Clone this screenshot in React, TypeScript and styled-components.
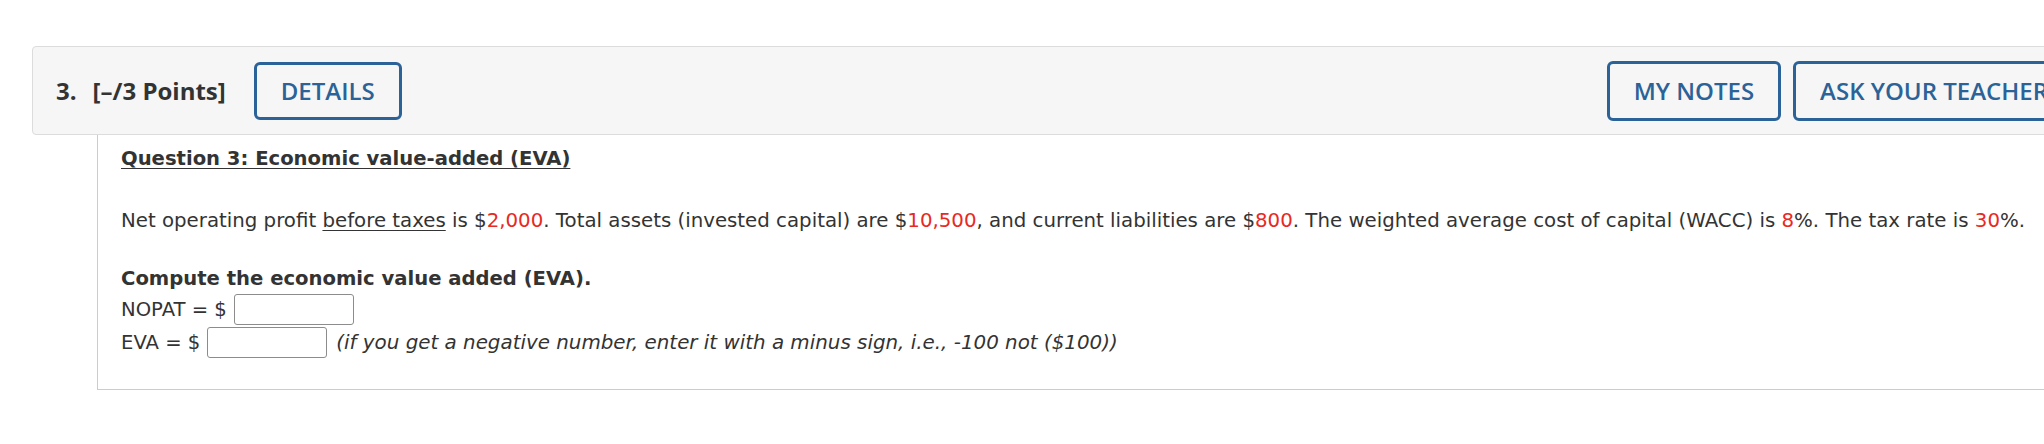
import React from "react";
import styled, { createGlobalStyle } from "styled-components";

const GlobalStyle = createGlobalStyle`
    html, body {
        margin: 0;
        padding: 0;
        background: #ffffff;
        overflow: hidden;
    }
`

const Page = styled.div`
    width: 2067px;
    padding: 46px 0 0 32px;
`

const Header = styled.div`
    box-sizing: border-box;
    height: 89px;
    display: flex;
    align-items: center;
    padding: 0 23px;
    background: #f6f6f6;
    border: 1px solid #dcdcdc;
    border-radius: 4px;
    font-family: "Open Sans", "Liberation Sans", sans-serif;
    color: #333333;
`

const Number = styled.span`
    font-size: 24px;
    font-weight: 700;
    margin-right: 16px;
`

const Points = styled.span`
    font-size: 24px;
    font-weight: 700;
    margin-right: 28px;
`

const Actions = styled.div`
    margin-left: auto;
    display: flex;
    gap: 12px;
`

const Button = styled.button<{ $tall?: boolean }>`
    box-sizing: border-box;
    height: ${p => (p.$tall ? 60 : 58)}px;
    padding: 0 24px;
    background: transparent;
    border: 3px solid #2b6297;
    border-radius: 6px;
    color: #2b6297;
    font-family: "Open Sans", "Liberation Sans", sans-serif;
    font-size: 24px;
    font-weight: 600;
    white-space: nowrap;
`

const Body = styled.div`
    margin-left: 65px;
    padding: 10px 23px 30px;
    border-left: 1px solid #cccccc;
    border-bottom: 1px solid #cccccc;
    font-family: "DejaVu Sans", Verdana, sans-serif;
    font-size: 19.6px;
    line-height: 28px;
    color: #333333;
`

const Title = styled.div`
    font-weight: 700;
    text-decoration: underline;
    text-underline-offset: 3px;
`

const Paragraph = styled.p`
    margin: 34px 0 30px;
    font-size: 19.78px;
    white-space: nowrap;
`

const Red = styled.span`
    color: #e8291f;
`

const Under = styled.span`
    text-decoration: underline;
    text-underline-offset: 3px;
`

const Prompt = styled.div`
    font-weight: 700;
`

const AnswerRow = styled.div`
    height: 33px;
    display: flex;
    align-items: center;
    gap: 7px;
`

const Input = styled.input`
    box-sizing: border-box;
    width: 120px;
    height: 31px;
    margin: 0;
    border: 1px solid #8c8c8c;
    border-radius: 3px;
    background: #ffffff;
`

const Hint = styled.span`
    font-style: italic;
    font-size: 19.86px;
    margin-left: 2px;
`

export default function App() {
    return (
        <>
            <GlobalStyle />
            <Page>
                <Header>
                    <Number>3.</Number>
                    <Points>[–/3 Points]</Points>
                    <Button>DETAILS</Button>
                    <Actions>
                        <Button $tall>MY NOTES</Button>
                        <Button $tall>ASK YOUR TEACHER</Button>
                    </Actions>
                </Header>
                <Body>
                    <Title>Question 3: Economic value-added (EVA)</Title>
                    <Paragraph>
                        Net operating profit <Under>before taxes</Under> is $<Red>2,000</Red>. Total assets (invested
                        capital) are $<Red>10,500</Red>, and current liabilities are $<Red>800</Red>. The weighted
                        average cost of capital (WACC) is <Red>8</Red>%. The tax rate is <Red>30</Red>%.
                    </Paragraph>
                    <Prompt>Compute the economic value added (EVA).</Prompt>
                    <AnswerRow>
                        <span>NOPAT = $</span>
                        <Input type="text" />
                    </AnswerRow>
                    <AnswerRow>
                        <span>EVA = $</span>
                        <Input type="text" />
                        <Hint>(if you get a negative number, enter it with a minus sign, i.e., -100 not ($100))</Hint>
                    </AnswerRow>
                </Body>
            </Page>
        </>
    )
}
